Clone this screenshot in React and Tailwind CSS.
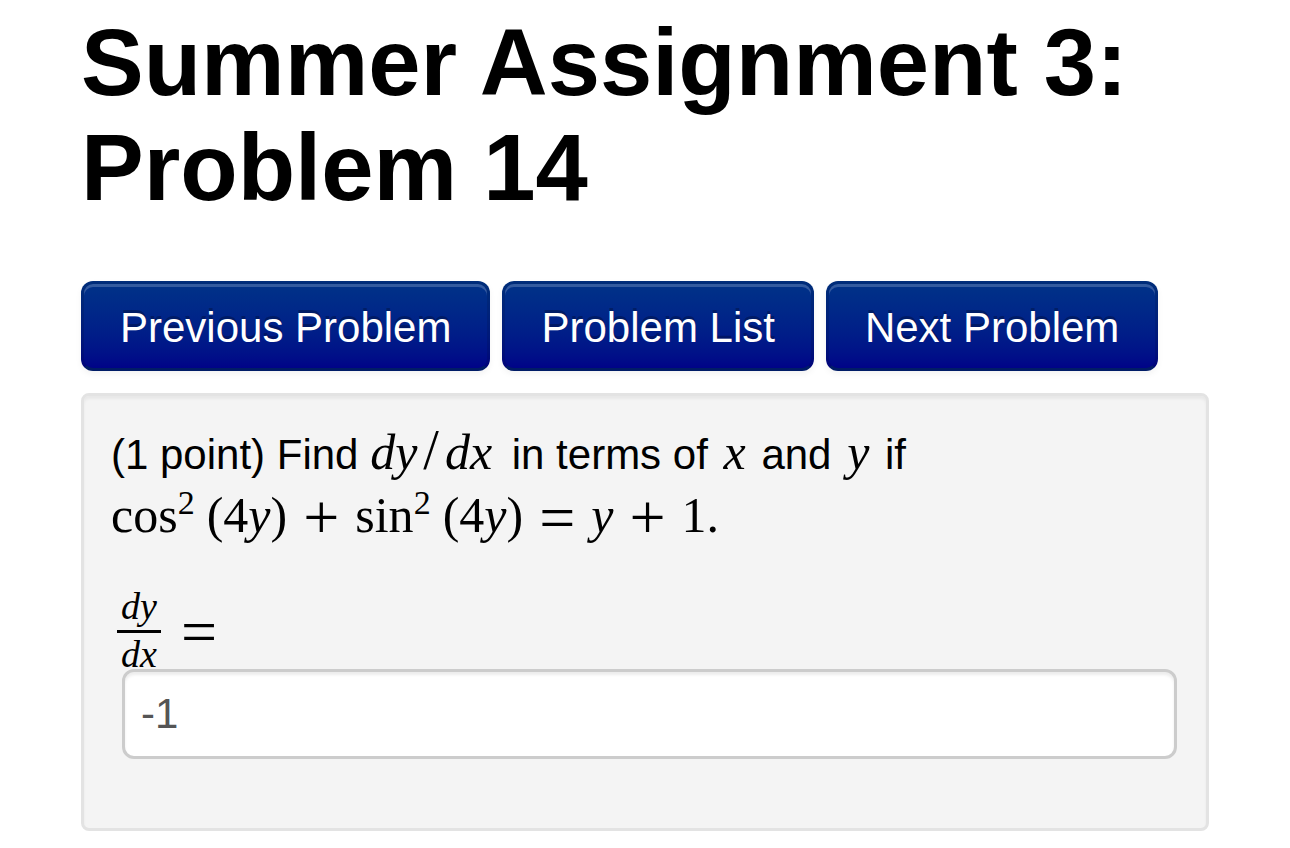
import React, { useState } from 'react';

const links = ['Previous Problem', 'Problem List', 'Next Problem'];

function Var({ children }) {
  return <i className="font-['Liberation_Serif',serif] text-[50px] leading-[58px]">{children}</i>;
}

function Num({ children }) {
  return <span className="font-['Liberation_Serif',serif] text-[50px] leading-[58px]">{children}</span>;
}

function Op({ children }) {
  return <span className="mx-4 self-start font-['Liberation_Serif',serif] text-[64px] leading-[64px]">{children}</span>;
}

// Trig function squared, applied to 4y
function Squared({ name }) {
  return (
    <span className="flex items-baseline">
      <Num>{name}</Num>
      <sup className="top-0 mr-3 self-start font-['Liberation_Serif',serif] text-[34px] leading-none">2</sup>
      <Num>(4</Num>
      <Var>y</Var>
      <Num>)</Num>
    </span>
  );
}

function NavButton({ label }) {
  return (
    <button
      type="button"
      className="h-[90px] rounded-xl border-[3px] border-black/10 border-b-[#001c66] bg-linear-to-b from-[#003388] to-[#000088] bg-origin-border px-9 pt-[3px] whitespace-nowrap text-white shadow-[inset_0_3px_0_rgba(255,255,255,0.2),0_3px_6px_rgba(0,0,0,0.05)] text-shadow-[0_-3px_0_rgba(0,0,0,0.25)]"
    >
      {label}
    </button>
  );
}

export default function App() {
  const [answer, setAnswer] = useState('-1');

  return (
    <main className="min-h-screen bg-white px-[81px] pt-[10px] pb-4 font-['Liberation_Sans',Arial,sans-serif] text-[42px] leading-[64px] text-black">
      <h1 className="text-[94px] leading-[105px] font-bold">Summer Assignment 3: Problem 14</h1>

      <nav className="mt-[61px] flex flex-wrap gap-3">
        {links.map((label) => (
          <NavButton key={label} label={label} />
        ))}
      </nav>

      <section className="mt-[22px] rounded-lg border-[3px] border-[#e3e3e3] bg-[#f4f4f4] px-[27px] pt-[26px] pb-[69px] shadow-[inset_0_3px_3px_rgba(0,0,0,0.05)]">
        <p className="h-16">
          (1 point) Find{' '}
          <span className="mr-2">
            <Var>dy</Var>
            <span className="mx-[6px] font-['Liberation_Serif',serif] text-[56px] leading-none">/</span>
            <Var>dx</Var>
          </span>{' '}
          in terms of{' '}
          <span className="mx-1">
            <Var>x</Var>
          </span>{' '}
          and{' '}
          <span className="mx-1">
            <Var>y</Var>
          </span>{' '}
          if
        </p>
        <p className="flex h-16 items-baseline">
          <Squared name="cos" />
          <Op>+</Op>
          <Squared name="sin" />
          <Op>=</Op>
          <Var>y</Var>
          <Op>+</Op>
          <Num>1.</Num>
        </p>

        <label htmlFor="answer" className="mt-8 flex items-center pl-[6px]">
          <span className="flex flex-col font-['Liberation_Serif',serif] text-[38px] italic">
            <span className="border-b-[3px] border-black px-1 leading-[48px]">dy</span>
            <span className="h-9 px-1 leading-[42px]">dx</span>
          </span>
          <span className="flex pt-3 pl-1">
            <Op>=</Op>
          </span>
        </label>
        <div className="pr-[2px] pl-[11px]">
          <input
            id="answer"
            type="text"
            value={answer}
            onChange={(e) => setAnswer(e.target.value)}
            className="block h-[90px] w-full rounded-xl border-[3px] border-[#cccccc] bg-white px-4 text-[#555555] shadow-[inset_0_3px_3px_rgba(0,0,0,0.075)] outline-none"
          />
        </div>
      </section>
    </main>
  );
}
